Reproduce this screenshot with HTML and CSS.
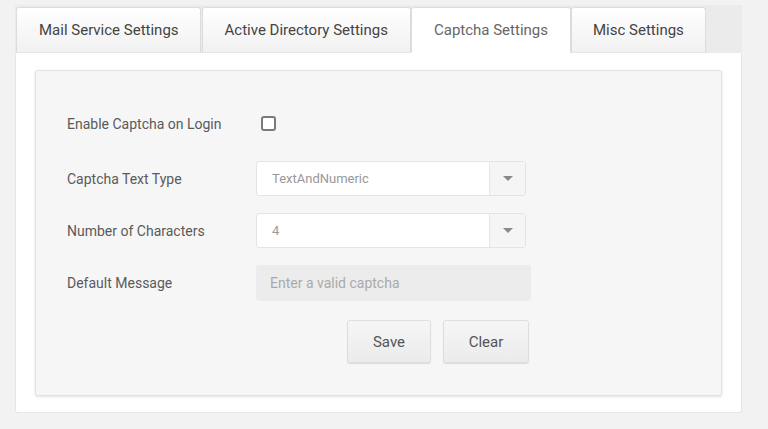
FILE: index.html
```html
<!DOCTYPE html>
<html>
<head lang="en">
    <meta charset="UTF-8">
    <title>Settings</title>
    <link rel="stylesheet" href="styles.css">
</head>
<body>
<div class="settings">
    <div class="tabs">
        <div class="tab">Mail Service Settings</div>
        <div class="tab">Active Directory Settings</div>
        <div class="tab active">Captcha Settings</div>
        <div class="tab">Misc Settings</div>
    </div>
    <div class="panel">
        <div class="card">
            <div class="row check-row">
                <label class="label">Enable Captcha on Login</label>
                <input class="check" type="checkbox"/>
            </div>
            <div class="row">
                <label class="label">Captcha Text Type</label>
                <div class="select">
                    <span class="value">TextAndNumeric</span>
                    <span class="arrow"><i></i></span>
                </div>
            </div>
            <div class="row">
                <label class="label">Number of Characters</label>
                <div class="select">
                    <span class="value">4</span>
                    <span class="arrow"><i></i></span>
                </div>
            </div>
            <div class="row">
                <label class="label">Default Message</label>
                <input class="text" type="text" placeholder="Enter a valid captcha"/>
            </div>
            <div class="row">
                <span class="label"></span>
                <div class="buttons">
                    <button class="btn save">Save</button>
                    <button class="btn clear">Clear</button>
                </div>
            </div>
        </div>
    </div>
</div>
</body>
</html>
```

FILE: styles.css
```css
* {
    margin: 0;
    padding: 0;
    box-sizing: border-box;
}

body {
    background: #f2f2f2;
    font-family: Roboto, "Liberation Sans", sans-serif;
}

.settings {
    width: 727px;
    margin: 5px 0 0 15px;
}

.tabs {
    display: flex;
    height: 48px;
    padding: 2px 0 0 1px;
    background: #ebebeb;
}

.tab {
    display: flex;
    align-items: center;
    height: 46px;
    padding: 0 22px;
    font-size: 15px;
    color: #444;
    background: linear-gradient(#ffffff, #f1f1f1);
    border: 1px solid #dcdcdc;
    border-bottom-color: #e6e6e6;
    border-radius: 3px 3px 0 0;
}

.tab:first-child {
    padding: 0 21px 0 22px;
}

.tab:nth-child(2) {
    margin-left: 1px;
}

.tab:last-child {
    padding: 0 21px;
}

.tab.active {
    background: #fff;
    color: #666;
    border-bottom-color: #fff;
}

.panel {
    background: #fff;
    border: 1px solid #e6e6ea;
    border-top: 0;
    border-radius: 0 0 3px 3px;
    padding: 17px 19px 16px 19px;
}

.card {
    height: 326px;
    padding: 35px 0 0 31px;
    background: #f6f6f6;
    border: 1px solid #e2e2e6;
    border-radius: 3px;
    box-shadow: 0 1px 3px rgba(0, 0, 0, 0.12);
}

.row {
    display: flex;
    align-items: center;
    margin-bottom: 17px;
}

.check-row {
    height: 35px;
    margin-bottom: 20px;
}

.label {
    width: 189px;
    font-size: 14px;
    color: #5a5a5a;
}

.check {
    appearance: none;
    width: 15px;
    height: 15px;
    margin: 0 0 0 5px;
    border: 2px solid #7a7a7a;
    border-radius: 3px;
    background: #fff;
}

.select {
    display: flex;
    width: 270px;
    height: 35px;
    background: #fff;
    border: 1px solid #e4e4e4;
    border-radius: 3px;
}

.select .value {
    flex: 1;
    display: flex;
    align-items: center;
    padding-left: 15px;
    font-size: 13px;
    color: #999;
}

.select .arrow {
    display: flex;
    align-items: center;
    justify-content: center;
    width: 36px;
    background: #f5f5f5;
    border-left: 1px solid #e6e6e6;
}

.select .arrow i {
    width: 0;
    height: 0;
    border-left: 5px solid transparent;
    border-right: 5px solid transparent;
    border-top: 5px solid #8a8a8a;
}

.text {
    width: 275px;
    height: 36px;
    padding-left: 14px;
    font-family: inherit;
    font-size: 14px;
    background: #ececec;
    border: 0;
    border-radius: 3px;
}

.text::placeholder {
    color: #aaa;
}

.buttons {
    display: flex;
    justify-content: flex-end;
    gap: 12px;
    width: 273px;
    margin-top: 2px;
}

.btn {
    height: 43px;
    font-family: inherit;
    font-size: 15px;
    color: #555;
    background: linear-gradient(#f6f6f6, #ebebeb);
    border: 1px solid #dedede;
    border-radius: 3px;
    box-shadow: 0 1px 1px rgba(0, 0, 0, 0.12);
}

.save {
    width: 84px;
}

.clear {
    width: 86px;
}
```
